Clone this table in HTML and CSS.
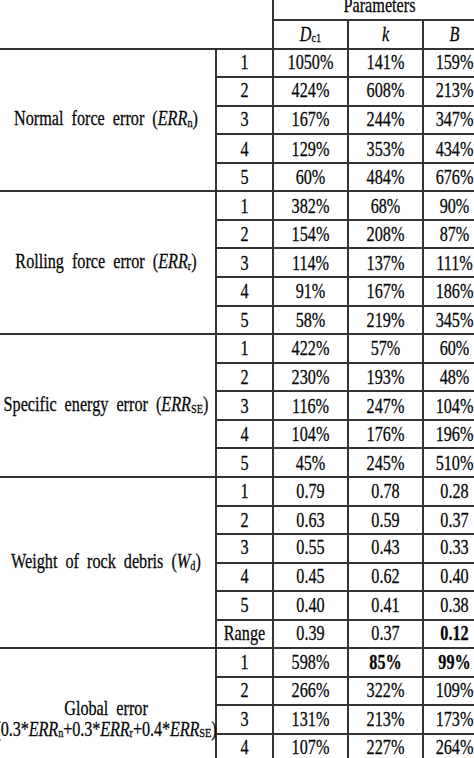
FILE: index.html
```html
<!DOCTYPE html>
<html>
<head>
<meta charset="utf-8">
<link rel="stylesheet" href="styles.css">
</head>
<body>
<table class="tbl">
  <colgroup>
    <col class="c-label"><col class="c-idx"><col class="c-val"><col class="c-val"><col class="c-last">
  </colgroup>
  <tbody>
    <tr class="row">
      <td class="corner" colspan="2" rowspan="2"></td>
      <td class="head params" colspan="3"><span class="t">Parameters</span></td>
    </tr>
    <tr class="row head-row">
      <td class="head"><span class="t"><i>D</i><sub>c1</sub></span></td>
      <td class="head"><span class="t"><i>k</i></span></td>
      <td class="head"><span class="t"><i>B</i></span></td>
    </tr>

    <tr class="row group-start">
      <td class="label" rowspan="5"><div class="lab"><span>Normal force error (<i>ERR</i><sub>n</sub>)</span></div></td>
      <td><span class="t">1</span></td><td><span class="t">1050%</span></td><td><span class="t">141%</span></td><td><span class="t">159%</span></td>
    </tr>
    <tr class="row"><td><span class="t">2</span></td><td><span class="t">424%</span></td><td><span class="t">608%</span></td><td><span class="t">213%</span></td></tr>
    <tr class="row"><td><span class="t">3</span></td><td><span class="t">167%</span></td><td><span class="t">244%</span></td><td><span class="t">347%</span></td></tr>
    <tr class="row"><td><span class="t">4</span></td><td><span class="t">129%</span></td><td><span class="t">353%</span></td><td><span class="t">434%</span></td></tr>
    <tr class="row"><td><span class="t">5</span></td><td><span class="t">60%</span></td><td><span class="t">484%</span></td><td><span class="t">676%</span></td></tr>

    <tr class="row group-start">
      <td class="label" rowspan="5"><div class="lab"><span>Rolling force error (<i>ERR</i><sub>r</sub>)</span></div></td>
      <td><span class="t">1</span></td><td><span class="t">382%</span></td><td><span class="t">68%</span></td><td><span class="t">90%</span></td>
    </tr>
    <tr class="row"><td><span class="t">2</span></td><td><span class="t">154%</span></td><td><span class="t">208%</span></td><td><span class="t">87%</span></td></tr>
    <tr class="row"><td><span class="t">3</span></td><td><span class="t">114%</span></td><td><span class="t">137%</span></td><td><span class="t">111%</span></td></tr>
    <tr class="row"><td><span class="t">4</span></td><td><span class="t">91%</span></td><td><span class="t">167%</span></td><td><span class="t">186%</span></td></tr>
    <tr class="row"><td><span class="t">5</span></td><td><span class="t">58%</span></td><td><span class="t">219%</span></td><td><span class="t">345%</span></td></tr>

    <tr class="row group-start">
      <td class="label" rowspan="5"><div class="lab"><span>Specific energy error (<i>ERR</i><sub>SE</sub>)</span></div></td>
      <td><span class="t">1</span></td><td><span class="t">422%</span></td><td><span class="t">57%</span></td><td><span class="t">60%</span></td>
    </tr>
    <tr class="row"><td><span class="t">2</span></td><td><span class="t">230%</span></td><td><span class="t">193%</span></td><td><span class="t">48%</span></td></tr>
    <tr class="row"><td><span class="t">3</span></td><td><span class="t">116%</span></td><td><span class="t">247%</span></td><td><span class="t">104%</span></td></tr>
    <tr class="row"><td><span class="t">4</span></td><td><span class="t">104%</span></td><td><span class="t">176%</span></td><td><span class="t">196%</span></td></tr>
    <tr class="row"><td><span class="t">5</span></td><td><span class="t">45%</span></td><td><span class="t">245%</span></td><td><span class="t">510%</span></td></tr>

    <tr class="row group-start">
      <td class="label" rowspan="6"><div class="lab"><span>Weight of rock debris (<i>W</i><sub>d</sub>)</span></div></td>
      <td><span class="t">1</span></td><td><span class="t">0.79</span></td><td><span class="t">0.78</span></td><td><span class="t">0.28</span></td>
    </tr>
    <tr class="row"><td><span class="t">2</span></td><td><span class="t">0.63</span></td><td><span class="t">0.59</span></td><td><span class="t">0.37</span></td></tr>
    <tr class="row"><td><span class="t">3</span></td><td><span class="t">0.55</span></td><td><span class="t">0.43</span></td><td><span class="t">0.33</span></td></tr>
    <tr class="row"><td><span class="t">4</span></td><td><span class="t">0.45</span></td><td><span class="t">0.62</span></td><td><span class="t">0.40</span></td></tr>
    <tr class="row"><td><span class="t">5</span></td><td><span class="t">0.40</span></td><td><span class="t">0.41</span></td><td><span class="t">0.38</span></td></tr>
    <tr class="row"><td><span class="t">Range</span></td><td><span class="t">0.39</span></td><td><span class="t">0.37</span></td><td><span class="t"><b>0.12</b></span></td></tr>

    <tr class="row group-start">
      <td class="label" rowspan="5"><div class="lab"><span>Global error</span><span class="tight">(0.3*<i>ERR</i><sub>n</sub>+0.3*<i>ERR</i><sub>r</sub>+0.4*<i>ERR</i><sub>SE</sub>)</span></div></td>
      <td><span class="t">1</span></td><td><span class="t">598%</span></td><td><span class="t"><b>85%</b></span></td><td><span class="t"><b>99%</b></span></td>
    </tr>
    <tr class="row"><td><span class="t">2</span></td><td><span class="t">266%</span></td><td><span class="t">322%</span></td><td><span class="t">109%</span></td></tr>
    <tr class="row"><td><span class="t">3</span></td><td><span class="t">131%</span></td><td><span class="t">213%</span></td><td><span class="t">173%</span></td></tr>
    <tr class="row"><td><span class="t">4</span></td><td><span class="t">107%</span></td><td><span class="t">227%</span></td><td><span class="t">264%</span></td></tr>
    <tr class="row"><td><span class="t">5</span></td><td></td><td></td><td></td></tr>
  </tbody>
</table>
</body>
</html>
```

FILE: styles.css
```css
html, body {
  margin: 0;
  padding: 0;
  background: #ffffff;
  overflow: hidden;
}

body {
  width: 474px;
  height: 758px;
  font-family: "Liberation Serif", "Times New Roman", serif;
  font-size: 16.2px;
  color: #050505;
  -webkit-text-stroke: 0.2px #050505;
}

.tbl {
  border-collapse: collapse;
  table-layout: fixed;
  width: 485px;
  margin-top: -8.6px;
}

.c-label { width: 216px; }
.c-idx { width: 57px; }
.c-val { width: 75px; }
.c-last { width: 62px; }

.row {
  height: 28.571px;
}

.tbl td {
  padding: 0;
  text-align: center;
  vertical-align: middle;
  white-space: nowrap;
  border: 2px solid #333333;
  line-height: 16px;
}

.tbl td.corner {
  border-top: none;
  border-left: none;
}

.tbl td.head.params {
  border-top: none;
}

.tbl td.label {
  border-left: none;
  overflow: visible;
}

.tbl td:last-child {
  border-right: none;
}

.t {
  display: inline-block;
  transform: scaleY(1.3);
}

.lab {
  display: flex;
  flex-direction: column;
  align-items: center;
  justify-content: center;
  width: 212px;
  word-spacing: 4px;
  line-height: 15.5px;
  transform: scaleY(1.3);
}

.lab span {
  white-space: nowrap;
}

.lab .tight {
  letter-spacing: -0.1px;
}

sub {
  font-size: 0.64em;
  vertical-align: -0.12em;
  line-height: 0;
  word-spacing: 0;
}

i {
  font-style: italic;
}

b {
  font-weight: bold;
}
```
